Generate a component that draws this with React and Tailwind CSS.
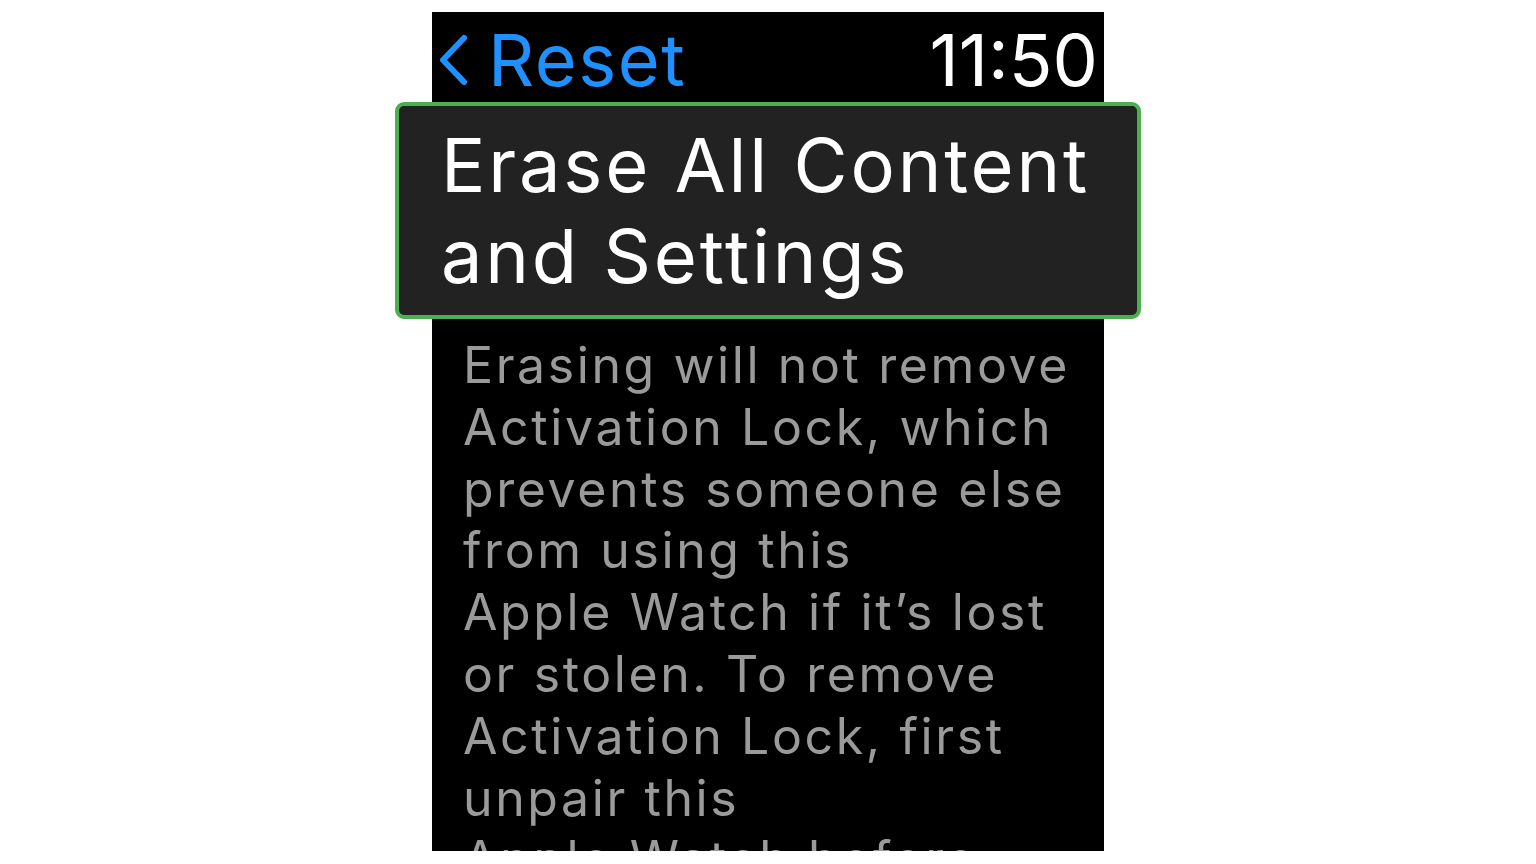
import React from 'react';

const font = { fontFamily: 'Inter, "Liberation Sans", sans-serif' };

const App = () => {
  return (
    <div className="w-[1536px] h-[864px] bg-white overflow-hidden" style={font}>
      <div className="ml-[395px] pt-[12px] w-[746px] h-[851px] flex flex-col">
        {/* Header */}
        <div className="mx-[37px] h-[90px] bg-black flex items-center justify-between pl-[6px] pr-[6px] pt-[6px]">
          <div className="flex items-center gap-[20px] text-[#1e90ff]">
            <svg width="30" height="52" viewBox="0 0 30 52" fill="none">
              <path d="M26 4 L5 26 L26 48" stroke="currentColor" strokeWidth="6" strokeLinecap="round" strokeLinejoin="round" />
            </svg>
            <span className="text-[72px] leading-none tracking-[1.5px]">Reset</span>
          </div>
          <span className="text-[72px] leading-none text-white">11:50</span>
        </div>

        {/* Highlighted row */}
        <div className="h-[217px] border-[4px] border-[#4caf50] rounded-[9px] bg-[#222222] pl-[42px] pt-[14px]">
          <p className="text-[74px] leading-[91px] text-white tracking-[2.8px]">
            Erase All Content
            <br />
            and Settings
          </p>
        </div>

        {/* Body */}
        <div className="mx-[37px] flex-1 bg-black overflow-hidden pl-[31px] pt-[16px]">
          <p className="text-[50px] leading-[61.8px] text-[#9a9a9a] tracking-[2.6px]">
            Erasing will not remove
            <br />
            Activation Lock, which
            <br />
            prevents someone else
            <br />
            from using this
            <br />
            Apple Watch if it’s lost
            <br />
            or stolen. To remove
            <br />
            Activation Lock, first
            <br />
            unpair this
            <br />
            Apple Watch before
            <br />
            erasing.
          </p>
        </div>
      </div>
    </div>
  );
};

export default App;
